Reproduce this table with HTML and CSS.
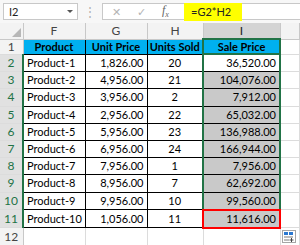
FILE: index.html
```html
<!DOCTYPE html>
<html lang="en">
<head>
    <meta charset="UTF-8">
    <title>Sale Price</title>
    <link rel="stylesheet" href="styles.css">
</head>
<body>

<div class="bar">
    <div class="namebox"><span>I2</span><span class="drop"></span></div>
    <div class="grip">⋮</div>
    <div class="formula">
        <span class="fbtn">✕</span>
        <span class="fbtn">✓</span>
        <span class="fx">f<sub>x</sub></span>
        <span class="ftext">=G2*H2</span>
    </div>
</div>

<table class="sheet">
    <colgroup>
        <col class="c-rh">
        <col class="c-f">
        <col class="c-g">
        <col class="c-h">
        <col class="c-i">
        <col>
    </colgroup>
    <tr class="colhead">
        <th class="corner"><span class="tri"></span></th>
        <th>F</th>
        <th>G</th>
        <th>H</th>
        <th class="on">I</th>
        <th></th>
    </tr>
    <tr class="r1">
        <th class="rh">1</th>
        <td class="hd">Product</td>
        <td class="hd">Unit Price</td>
        <td class="hd">Units Sold</td>
        <td class="hd sel-head">Sale Price</td>
        <td class="blank"></td>
    </tr>
    <tr class="row">
        <th class="rh on">2</th>
        <td>Product-1</td>
        <td class="num">1,826.00</td>
        <td class="mid">20</td>
        <td class="num sel first">36,520.00</td>
        <td class="blank"></td>
    </tr>
    <tr class="row">
        <th class="rh on">3</th>
        <td>Product-2</td>
        <td class="num">4,956.00</td>
        <td class="mid">21</td>
        <td class="num sel grey">104,076.00</td>
        <td class="blank"></td>
    </tr>
    <tr class="row">
        <th class="rh on">4</th>
        <td>Product-3</td>
        <td class="num">3,956.00</td>
        <td class="mid">2</td>
        <td class="num sel grey">7,912.00</td>
        <td class="blank"></td>
    </tr>
    <tr class="row">
        <th class="rh on">5</th>
        <td>Product-4</td>
        <td class="num">2,956.00</td>
        <td class="mid">22</td>
        <td class="num sel grey">65,032.00</td>
        <td class="blank"></td>
    </tr>
    <tr class="row">
        <th class="rh on">6</th>
        <td>Product-5</td>
        <td class="num">5,956.00</td>
        <td class="mid">23</td>
        <td class="num sel grey">136,988.00</td>
        <td class="blank"></td>
    </tr>
    <tr class="row">
        <th class="rh on">7</th>
        <td>Product-6</td>
        <td class="num">6,956.00</td>
        <td class="mid">24</td>
        <td class="num sel grey">166,944.00</td>
        <td class="blank"></td>
    </tr>
    <tr class="row">
        <th class="rh on">8</th>
        <td>Product-7</td>
        <td class="num">7,956.00</td>
        <td class="mid">1</td>
        <td class="num sel grey">7,956.00</td>
        <td class="blank"></td>
    </tr>
    <tr class="row">
        <th class="rh on">9</th>
        <td>Product-8</td>
        <td class="num">8,956.00</td>
        <td class="mid">7</td>
        <td class="num sel grey">62,692.00</td>
        <td class="blank"></td>
    </tr>
    <tr class="row">
        <th class="rh on">10</th>
        <td>Product-9</td>
        <td class="num">9,956.00</td>
        <td class="mid">10</td>
        <td class="num sel grey before-red">99,560.00</td>
        <td class="blank"></td>
    </tr>
    <tr class="row">
        <th class="rh on">11</th>
        <td>Product-10</td>
        <td class="num">1,056.00</td>
        <td class="mid">11</td>
        <td class="num grey red">11,616.00
            <span class="quick">
                <svg width="14" height="13" viewBox="0 0 14 13">
                    <rect x="0.5" y="0.5" width="13" height="12" fill="#fff" stroke="#a6a6a6"/>
                    <rect x="2" y="2" width="4" height="3" fill="#2b78d0"/>
                    <rect x="7" y="2" width="4" height="3" fill="#2b78d0"/>
                    <line x1="2" y1="7" x2="11" y2="7" stroke="#7a7a7a"/>
                    <line x1="2" y1="10" x2="7" y2="10" stroke="#7a7a7a"/>
                    <line x1="9.5" y1="8" x2="9.5" y2="12" stroke="#444"/>
                    <line x1="7.5" y1="10" x2="11.5" y2="10" stroke="#444"/>
                </svg>
            </span>
        </td>
        <td class="blank"></td>
    </tr>
    <tr class="row">
        <th class="rh">12</th>
        <td class="blank"></td>
        <td class="blank"></td>
        <td class="blank"></td>
        <td class="blank"></td>
        <td class="blank"></td>
    </tr>
</table>

</body>
</html>
```

FILE: styles.css
```css
body {
    margin: 0;
    width: 300px;
    height: 245px;
    overflow: hidden;
    background-color: #fff;
    font-family: Lato, "Noto Sans", sans-serif;
    color: #000;
}
.bar {
    height: 23px;
    display: flex;
    align-items: center;
    background-color: #f7f7f7;
}
.namebox {
    margin-left: 3px;
    width: 64px;
    height: 15px;
    border: 1px solid #c8c8c8;
    background-color: #fff;
    display: flex;
    align-items: center;
    justify-content: space-between;
    padding: 0 4px 0 5px;
    font-size: 11px;
    color: #222;
}
.namebox .drop {
    width: 0;
    height: 0;
    border-left: 3px solid transparent;
    border-right: 3px solid transparent;
    border-top: 3px solid #555;
}
.grip {
    width: 24px;
    text-align: center;
    color: #b0b0b0;
    font-size: 12px;
}
.formula {
    flex: 1;
    height: 15px;
    border: 1px solid #c8c8c8;
    border-right: none;
    background-color: #fff;
    display: flex;
    align-items: center;
    font-size: 11px;
}
.fbtn {
    width: 25px;
    text-align: center;
    color: #b4b4b4;
    font-size: 11px;
}
.fbtn:first-child {
    margin-left: 1px;
}
.fx {
    margin-left: 8px;
    width: 18px;
    font-family: "Liberation Serif", serif;
    font-style: italic;
    color: #666;
    font-size: 12px;
}
.fx sub {
    font-size: 8px;
}
.ftext {
    margin-left: 4px;
    width: 51px;
    height: 18px;
    padding-left: 7px;
    background-color: #ffff00;
    display: flex;
    align-items: center;
    color: #222;
}

.sheet {
    border-collapse: collapse;
    table-layout: fixed;
    width: 300px;
    font-size: 11px;
    line-height: 12px;
}
.c-rh { width: 23px; }
.c-f { width: 62px; }
.c-g { width: 62px; }
.c-h { width: 56px; }
.c-i { width: 77px; }

.colhead th {
    height: 15px;
    padding: 0;
    background-color: #f3f3f3;
    border-right: 1px solid #c8c8c8;
    border-bottom: 1px solid #c8c8c8;
    font-weight: normal;
    color: #444;
    font-size: 12px;
}
.colhead th.on {
    background-color: #d4d4d4;
    color: #222;
    border-bottom: 2px solid #217346;
}
.corner {
    position: relative;
}
.tri {
    position: absolute;
    right: 2px;
    bottom: 2px;
    width: 0;
    height: 0;
    border-left: 9px solid transparent;
    border-bottom: 9px solid #b7b7b7;
}

.rh {
    padding: 0;
    background-color: #f3f3f3;
    border-right: 1px solid #c8c8c8;
    border-bottom: 1px solid #dcdcdc;
    font-weight: normal;
    color: #444;
    font-size: 12px;
}
.rh.on {
    background-color: #e1e1e1;
    color: #217346;
    border-right: 2px solid #217346;
}

.r1 td, .r1 th {
    height: 13px;
}
.row td, .row th {
    height: 16.2px;
}
td {
    padding: 0 3px;
    border: 1px solid #000;
    white-space: nowrap;
    overflow: visible;
}
td.hd {
    background-color: #00b0f0;
    font-weight: bold;
    text-align: center;
    padding: 0;
}
td.sel-head {
    border: 2px solid #217346;
}
td.num {
    text-align: right;
}
td.mid {
    text-align: center;
}
td.sel {
    border-left: 2px solid #217346;
    border-right: 2px solid #217346;
}
td.first {
    border-top: 2px solid #217346;
}
td.grey {
    background-color: #c9c9c9;
}
td.before-red {
    border-bottom: 2px solid #ff0000;
}
td.red {
    border: 2px solid #ff0000;
    position: relative;
}
td.blank {
    border: 1px solid #dcdcdc;
}
.quick {
    position: absolute;
    right: -17px;
    bottom: -16px;
    width: 14px;
    height: 13px;
    display: flex;
}
```
